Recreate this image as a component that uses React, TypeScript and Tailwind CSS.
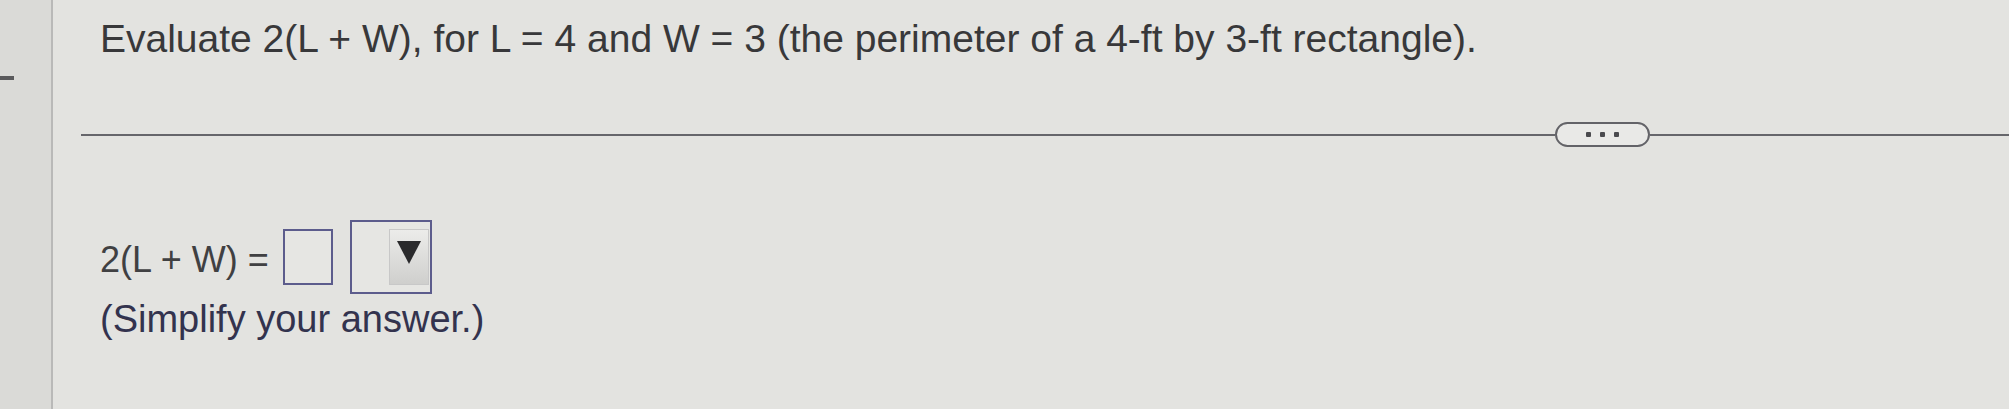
export default function App() {
  return (
    <div
      className="flex h-[409px] w-full overflow-hidden bg-[#e3e3e0] text-[#38383a]"
      style={{ fontFamily: '"Liberation Sans", Arial, sans-serif' }}
    >
      {/* left sidebar edge */}
      <div className="w-[53px] shrink-0 border-r-2 border-[#b9b9b8] bg-[#dadad7] pt-[76px]">
        <div className="h-[4px] w-[14px] bg-[#5a5a5c]" />
      </div>

      <div className="flex flex-1 flex-col">
        <div className="pl-[47px] pt-[19px] text-[39px] leading-none whitespace-nowrap">
          Evaluate 2(L + W), for L = 4 and W = 3 (the perimeter of a 4-ft by 3-ft rectangle).
        </div>

        <div className="mt-[64px] flex items-center pl-[28px]">
          <div className="h-[2px] flex-1 bg-[#66666b]" />
          <button className="flex h-[25px] w-[95px] shrink-0 items-center justify-center gap-[9px] rounded-full border-2 border-[#636368] bg-[#e9e9e7]">
            <span className="h-[5px] w-[5px] rounded-[1px] bg-[#4a4a4e]" />
            <span className="h-[5px] w-[5px] rounded-[1px] bg-[#4a4a4e]" />
            <span className="h-[5px] w-[5px] rounded-[1px] bg-[#4a4a4e]" />
          </button>
          <div className="h-[2px] w-[359px] shrink-0 bg-[#66666b]" />
        </div>

        <div className="mt-[73px] flex items-center pl-[47px]">
          <span className="pt-[6px] text-[36px] leading-none text-[#404042]">2(L + W) =</span>
          <div className="ml-[14px] h-[56px] w-[50px] border-2 border-[#5c5c8c] bg-[#e6e6e3]" />
          <div className="ml-[17px] flex h-[74px] w-[82px] items-center justify-end border-2 border-[#5c5c8c] bg-[#e6e6e3] pr-[1px]">
            <div className="flex h-[56px] w-[40px] items-start justify-center border border-[#c8c8c8] bg-gradient-to-b from-[#ececea] to-[#cfcfcd] pt-[10px]">
              <svg width="26" height="25" viewBox="0 0 26 25">
                <path d="M1 1 H25 L13 24 Z" fill="#2a2a2c" />
              </svg>
            </div>
          </div>
        </div>

        <div className="mt-[6px] pl-[47px] text-[38px] leading-none text-[#33334e]">
          (Simplify your answer.)
        </div>
      </div>
    </div>
  );
}
